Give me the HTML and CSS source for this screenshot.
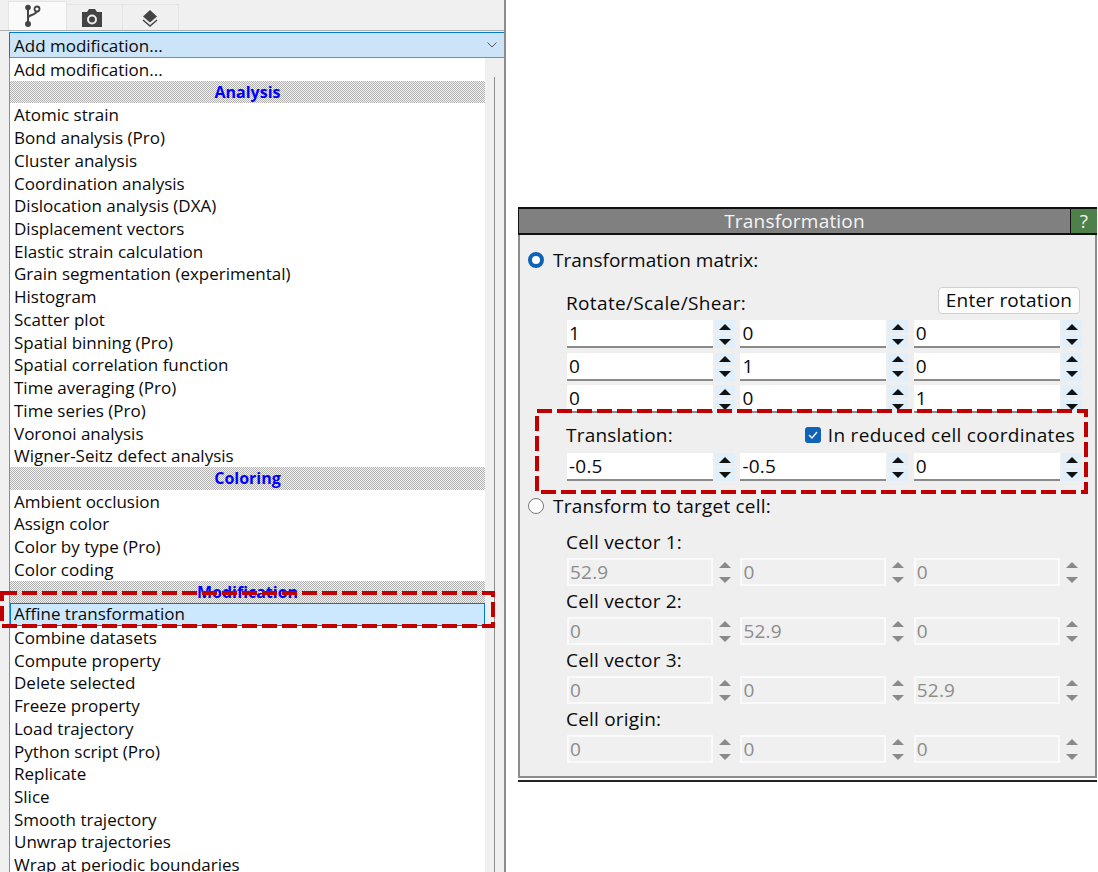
FILE: index.html
```html
<!DOCTYPE html>
<html lang="en">
<head>
    <meta charset="UTF-8">
    <title>Affine transformation</title>
    <link rel="stylesheet" href="styles.css">
</head>
<body>
    <div class="page">
        <div class="left-panel">
            <div class="tabs">
                <div class="tab tab-active">
                    <svg width="20" height="24" viewBox="0 0 20 24"><path d="M5 4v16M5 14c0-4 9-2 9-8" fill="none" stroke="#444" stroke-width="2"/><circle cx="5" cy="3.500" r="2.800" fill="#444"/><circle cx="5" cy="20" r="3" fill="#444"/><circle cx="14" cy="5" r="2.500" fill="#fff" stroke="#444" stroke-width="1.800"/></svg>
                </div>
                <div class="tab tab-camera">
                    <svg width="22" height="20" viewBox="0 0 22 20"><path d="M1 4h5l2-3h6l2 3h5v15H1z" fill="#444"/><circle cx="11" cy="11.500" r="5" fill="#eee"/><circle cx="11" cy="11.500" r="3" fill="#444"/></svg>
                </div>
                <div class="tab tab-layers">
                    <svg width="18" height="18" viewBox="0 0 18 18"><path d="M9 1l7 6.500-7 6-7-6z" fill="#444"/><path d="M2 11l7 6 7-6" fill="none" stroke="#444" stroke-width="1.500"/></svg>
                </div>
            </div>
            <div class="combo">
                <span>Add modification...</span>
                <svg width="10" height="6" viewBox="0 0 10 6"><path d="M.5.5L5 5 9.500.5" fill="none" stroke="#555"/></svg>
            </div>
            <div class="list-wrap">
                <div class="list">
                    <div class="item">Add modification...</div>
                    <div class="item group">Analysis</div>
                    <div class="item">Atomic strain</div>
                    <div class="item">Bond analysis (Pro)</div>
                    <div class="item">Cluster analysis</div>
                    <div class="item">Coordination analysis</div>
                    <div class="item">Dislocation analysis (DXA)</div>
                    <div class="item">Displacement vectors</div>
                    <div class="item">Elastic strain calculation</div>
                    <div class="item">Grain segmentation (experimental)</div>
                    <div class="item">Histogram</div>
                    <div class="item">Scatter plot</div>
                    <div class="item">Spatial binning (Pro)</div>
                    <div class="item">Spatial correlation function</div>
                    <div class="item">Time averaging (Pro)</div>
                    <div class="item">Time series (Pro)</div>
                    <div class="item">Voronoi analysis</div>
                    <div class="item">Wigner-Seitz defect analysis</div>
                    <div class="item group">Coloring</div>
                    <div class="item">Ambient occlusion</div>
                    <div class="item">Assign color</div>
                    <div class="item">Color by type (Pro)</div>
                    <div class="item">Color coding</div>
                    <div class="item group">Modification</div>
                    <div class="item selected">Affine transformation</div>
                    <div class="item">Combine datasets</div>
                    <div class="item">Compute property</div>
                    <div class="item">Delete selected</div>
                    <div class="item">Freeze property</div>
                    <div class="item">Load trajectory</div>
                    <div class="item">Python script (Pro)</div>
                    <div class="item">Replicate</div>
                    <div class="item">Slice</div>
                    <div class="item">Smooth trajectory</div>
                    <div class="item">Unwrap trajectories</div>
                    <div class="item">Wrap at periodic boundaries</div>
                </div>
                <div class="scrollbar"><div class="scroll-line"></div></div>
            </div>
            <svg class="mark mark-list" width="500" height="38"><rect x="2" y="2" width="491" height="33" fill="none" stroke="#c00000" stroke-width="4" stroke-dasharray="15 5"/></svg>
        </div>

        <div class="right-panel">
            <div class="title-bar">
                <div class="title">Transformation</div>
                <div class="help">?</div>
            </div>
            <div class="params">
                <div class="radio-row radio-first">
                    <span class="radio radio-on"></span>
                    <span>Transformation matrix:</span>
                </div>
                <div class="section">
                    <div class="label-row rotate-row">
                        <span class="rotate-label">Rotate/Scale/Shear:</span>
                        <span class="button">Enter rotation</span>
                    </div>
                    <div class="spin-row">
                        <div class="spin"><div class="field">1</div><div class="arrows"><i class="up"></i><i class="down"></i></div></div>
                        <div class="spin"><div class="field">0</div><div class="arrows"><i class="up"></i><i class="down"></i></div></div>
                        <div class="spin"><div class="field">0</div><div class="arrows"><i class="up"></i><i class="down"></i></div></div>
                    </div>
                    <div class="spin-row">
                        <div class="spin"><div class="field">0</div><div class="arrows"><i class="up"></i><i class="down"></i></div></div>
                        <div class="spin"><div class="field">1</div><div class="arrows"><i class="up"></i><i class="down"></i></div></div>
                        <div class="spin"><div class="field">0</div><div class="arrows"><i class="up"></i><i class="down"></i></div></div>
                    </div>
                    <div class="spin-row">
                        <div class="spin"><div class="field">0</div><div class="arrows"><i class="up"></i><i class="down"></i></div></div>
                        <div class="spin"><div class="field">0</div><div class="arrows"><i class="up"></i><i class="down"></i></div></div>
                        <div class="spin"><div class="field">1</div><div class="arrows"><i class="up"></i><i class="down"></i></div></div>
                    </div>
                    <div class="label-row translation-row">
                        <span>Translation:</span>
                        <span class="check-label">
                            <span class="checkbox"><svg width="10" height="8" viewBox="0 0 10 8"><path d="M1 4l3 3 5-6" fill="none" stroke="#fff" stroke-width="1.300"/></svg></span>
                            In reduced cell coordinates
                        </span>
                    </div>
                    <div class="spin-row">
                        <div class="spin"><div class="field">-0.5</div><div class="arrows"><i class="up"></i><i class="down"></i></div></div>
                        <div class="spin"><div class="field">-0.5</div><div class="arrows"><i class="up"></i><i class="down"></i></div></div>
                        <div class="spin"><div class="field">0</div><div class="arrows"><i class="up"></i><i class="down"></i></div></div>
                    </div>
                </div>
                <div class="radio-row radio-second">
                    <span class="radio"></span>
                    <span>Transform to target cell:</span>
                </div>
                <div class="section disabled">
                    <div class="cell-label">Cell vector 1:</div>
                    <div class="spin-row">
                        <div class="spin"><div class="field">52.9</div><div class="arrows"><i class="up"></i><i class="down"></i></div></div>
                        <div class="spin"><div class="field">0</div><div class="arrows"><i class="up"></i><i class="down"></i></div></div>
                        <div class="spin"><div class="field">0</div><div class="arrows"><i class="up"></i><i class="down"></i></div></div>
                    </div>
                    <div class="cell-label">Cell vector 2:</div>
                    <div class="spin-row">
                        <div class="spin"><div class="field">0</div><div class="arrows"><i class="up"></i><i class="down"></i></div></div>
                        <div class="spin"><div class="field">52.9</div><div class="arrows"><i class="up"></i><i class="down"></i></div></div>
                        <div class="spin"><div class="field">0</div><div class="arrows"><i class="up"></i><i class="down"></i></div></div>
                    </div>
                    <div class="cell-label">Cell vector 3:</div>
                    <div class="spin-row">
                        <div class="spin"><div class="field">0</div><div class="arrows"><i class="up"></i><i class="down"></i></div></div>
                        <div class="spin"><div class="field">0</div><div class="arrows"><i class="up"></i><i class="down"></i></div></div>
                        <div class="spin"><div class="field">52.9</div><div class="arrows"><i class="up"></i><i class="down"></i></div></div>
                    </div>
                    <div class="cell-label">Cell origin:</div>
                    <div class="spin-row">
                        <div class="spin"><div class="field">0</div><div class="arrows"><i class="up"></i><i class="down"></i></div></div>
                        <div class="spin"><div class="field">0</div><div class="arrows"><i class="up"></i><i class="down"></i></div></div>
                        <div class="spin"><div class="field">0</div><div class="arrows"><i class="up"></i><i class="down"></i></div></div>
                    </div>
                </div>
            </div>
            <svg class="mark mark-translation" width="554" height="86"><rect x="2" y="2" width="549" height="81" fill="none" stroke="#c00000" stroke-width="4" stroke-dasharray="15 5"/></svg>
        </div>
    </div>
</body>
</html>
```

FILE: styles.css
```css
html, body {
    margin: 0;
    padding: 0;
    background: white;
}

body {
    font-family: "Open Sans", "Noto Sans", sans-serif;
    font-size: 17px;
    color: #0a0a0a;
}

.page {
    display: flex;
    width: 1098px;
    height: 872px;
    overflow: hidden;
}

.mark {
    position: absolute;
}

/* Left side: tabs and dropdown */
.left-panel {
    position: relative;
    width: 504px;
    height: 872px;
    flex: none;
    background: #f0f0f0;
    border-right: 2px solid #8c8c8c;
    overflow: hidden;
}

.mark-list {
    left: 0;
    top: 591px;
}

.tabs {
    display: flex;
    align-items: flex-end;
    height: 29px;
    padding: 1px 0 0 8px;
    border-bottom: 1px solid #b0b0b0;
}

.tab {
    display: flex;
    align-items: center;
    justify-content: center;
    box-sizing: border-box;
    width: 56px;
    height: 26px;
    border: 1px solid #e4e4e4;
    border-bottom: none;
    border-left: none;
}

.tab-active {
    width: 59px;
    height: 29px;
    padding-right: 10px;
    background: #fafafa;
    border-left: 1px solid #e4e4e4;
}

.tab-camera {
    padding-right: 6px;
}

.tab-layers {
    padding-right: 2px;
}

.combo {
    display: flex;
    align-items: center;
    justify-content: space-between;
    box-sizing: border-box;
    width: 496px;
    height: 26px;
    margin: 1px 0 0 9px;
    padding: 0 7px 0 4px;
    background: #cce4f7;
    border: 1px solid #0078d4;
    border-bottom-color: #8a8a8a;
}

.list-wrap {
    display: flex;
    margin-left: 9px;
}

.list {
    box-sizing: border-box;
    width: 476px;
    background: white;
    border-left: 1px solid #8c8c8c;
}

.item {
    box-sizing: border-box;
    height: 22.72px;
    line-height: 23.5px;
    padding-left: 4px;
    white-space: nowrap;
}

.group {
    padding-left: 0;
    text-align: center;
    font-size: 16px;
    font-weight: bold;
    color: #0000ff;
    background: repeating-conic-gradient(#b0b0b0 0 25%, #f4f4f4 0 50%) 0 0 / 2px 2px;
}

.selected {
    background: #cce8ff;
    border: 1px solid #0078d7;
    padding-left: 3px;
    line-height: 20.72px;
}

.scrollbar {
    flex: 1;
    padding: 19px 0 0 9px;
}

.scroll-line {
    width: 1px;
    height: 800px;
    background: #8c8c8c;
}

/* Right side: transformation parameters */
.right-panel {
    position: relative;
    box-sizing: border-box;
    width: 579px;
    height: 575px;
    margin: 207px 0 0 12px;
    flex: none;
    font-size: 19px;
    letter-spacing: 0.2px;
    border-bottom: 2px solid #222;
}

.mark-translation {
    left: 17px;
    top: 202px;
}

.title-bar {
    display: flex;
    box-sizing: border-box;
    height: 28px;
    background: #808080;
    border: 2px solid #111;
    border-width: 2px 0 2px 1px;
    color: #f4f4f4;
}

.title {
    flex: 1;
    text-align: center;
    line-height: 24px;
}

.help {
    width: 26px;
    text-align: center;
    line-height: 24px;
    background: #4e8049;
    border-left: 1px solid #111;
}

.params {
    box-sizing: border-box;
    height: 543px;
    padding-top: 14px;
    background: #efefef;
    border-left: 2px solid #8c8c8c;
    border-right: 2px solid #8c8c8c;
    border-bottom: 2px solid #8c8c8c;
}

.radio-row {
    display: flex;
    align-items: center;
    gap: 9px;
    height: 22px;
    padding-left: 8px;
}

.radio-first {
    letter-spacing: 0;
}

.radio-second {
    margin-top: 14px;
}

.radio {
    box-sizing: border-box;
    width: 16px;
    height: 16px;
    background: white;
    border: 1px solid #7a7a7a;
    border-radius: 50%;
}

.radio-on {
    background: white;
    border: 4px solid #0f62b5;
}

.section {
    padding-left: 47px;
}

.label-row {
    display: flex;
    align-items: center;
    justify-content: space-between;
    margin-left: -1px;
}

.rotate-row {
    height: 27px;
    margin-top: 16px;
    margin-bottom: 6px;
    padding-right: 15px;
}

.rotate-label {
    padding-top: 4px;
    letter-spacing: 0.35px;
}

.button {
    box-sizing: border-box;
    width: 142px;
    height: 27px;
    line-height: 25px;
    text-align: center;
    background: #fdfdfd;
    border: 1px solid #d0d0d0;
    border-radius: 4px;
}

.translation-row {
    height: 26px;
    margin-top: 9px;
    margin-bottom: 5px;
    padding-right: 20px;
}

.check-label {
    display: flex;
    align-items: center;
    gap: 7px;
    letter-spacing: 0.3px;
}

.checkbox {
    display: flex;
    align-items: center;
    justify-content: center;
    width: 16px;
    height: 16px;
    background: #0f62b5;
    border-radius: 3px;
}

.spin-row {
    display: grid;
    grid-template-columns: repeat(3, 168px);
    column-gap: 5.4px;
    margin-bottom: 4.5px;
}

.spin {
    display: flex;
    gap: 2px;
    height: 28px;
}

.field {
    box-sizing: border-box;
    width: 146px;
    height: 28px;
    padding-left: 2px;
    line-height: 27px;
    background: white;
    border-bottom: 2px solid #8a8a8a;
}

.arrows {
    display: flex;
    flex-direction: column;
    justify-content: space-between;
    width: 20px;
}

.arrows i {
    display: flex;
    align-items: center;
    justify-content: center;
    height: 13px;
    background: #e1effb;
}

.arrows i::before {
    content: "";
    border-left: 6px solid transparent;
    border-right: 6px solid transparent;
}

.up::before {
    border-bottom: 6px solid #111;
}

.down::before {
    border-top: 6px solid #111;
}

.disabled .cell-label {
    height: 20px;
    line-height: 20px;
    margin-top: 5px;
    margin-left: -1px;
}

.disabled .cell-label:first-child {
    margin-top: 15px;
}

.disabled .spin-row {
    margin-top: 6px;
    margin-bottom: 0;
}

.disabled .field {
    color: #8c8c8c;
    background: #f0f0f0;
    border: 2px solid #fafafa;
    line-height: 24px;
    padding-left: 1px;
}

.disabled .arrows i {
    background: none;
}

.disabled .up::before {
    border-bottom-color: #8a8a8a;
}

.disabled .down::before {
    border-top-color: #8a8a8a;
}
```
